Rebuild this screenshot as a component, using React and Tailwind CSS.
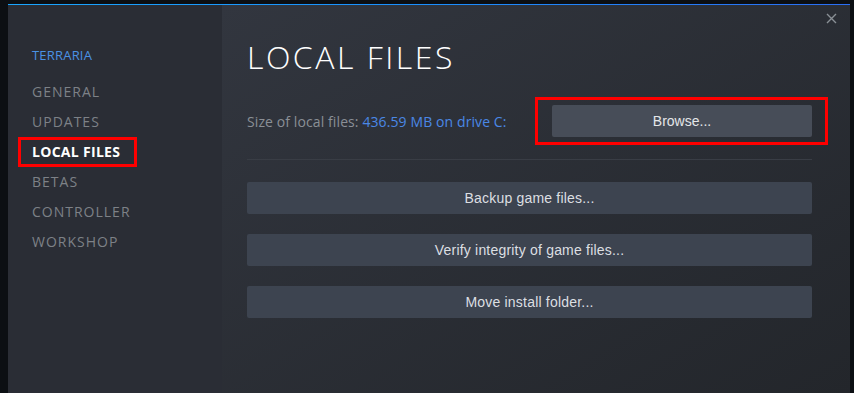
const menuItems = ["GENERAL", "UPDATES", "LOCAL FILES", "BETAS", "CONTROLLER", "WORKSHOP"];

const actions = ["Backup game files...", "Verify integrity of game files...", "Move install folder..."];

function CloseIcon() {
  return (
    <svg width="11" height="11" viewBox="0 0 11 11" fill="none">
      <path d="M1 1L10 10M10 1L1 10" stroke="#8a9096" strokeWidth="1.4" />
    </svg>
  );
}

export default function App() {
  return (
    <div className="h-[393px] w-[854px] overflow-hidden bg-[#0c0f13] pt-[4px] pl-[8px] pr-[4px]">
      <div className="flex h-full flex-col">
        <div className="h-px bg-gradient-to-r from-[#1aa6ff] via-[#1a8fff] to-[#2a6ef5]" />

        <div className="flex flex-1">
          <aside className="w-[214px] bg-[#2a2d35] pl-[24px] pt-[36px] font-['Open_Sans',sans-serif]">
            <div className="mb-[5px] flex h-[30px] items-center text-[13px] tracking-[0.2px] text-[#4a92e4]">
              TERRARIA
            </div>

            {menuItems.map((item) => {
              const active = item === "LOCAL FILES";

              return (
                <div
                  key={item}
                  className={
                    active
                      ? "relative flex h-[30px] items-center text-[14px] font-bold tracking-[0.3px] text-white"
                      : "flex h-[30px] items-center text-[14px] tracking-[1px] text-[#7d8187]"
                  }
                >
                  {item}
                  {active ? (
                    <span className="absolute -left-[14px] top-[1px] h-[30px] w-[119px] border-[3px] border-[#ff0000]" />
                  ) : null}
                </div>
              );
            })}
          </aside>

          <main className="relative flex-1 bg-gradient-to-br from-[#32363f] to-[#23262b] pl-[25px] pr-[38px] pt-[36px]">
            <button type="button" className="absolute right-[12px] top-[7px] p-[1px]">
              <CloseIcon />
            </button>

            <h1 className="h-[32px] font-['Open_Sans',sans-serif] text-[32px] font-light leading-[32px] tracking-[2.5px] text-white">
              LOCAL FILES
            </h1>

            <div className="mt-[32px] flex items-center justify-between">
              <p className="font-['Open_Sans',sans-serif] text-[14px] tracking-[0.1px] text-[#8a8f96]">
                Size of local files:{" "}
                <span className="text-[#4a88e6]">436.59 MB on drive C:</span>
              </p>

              <div className="relative">
                <button
                  type="button"
                  className="h-[32px] w-[260px] rounded-[2px] bg-[#474d58] font-['Liberation_Sans',sans-serif] text-[14px] text-[#e4e6e8]"
                >
                  Browse...
                </button>
                <span className="absolute -bottom-[8px] -left-[17px] -right-[16px] -top-[8px] border-[3px] border-[#ff0000]" />
              </div>
            </div>

            <div className="mt-[22px] h-px bg-[#393d45]" />

            <div className="mt-[22px] flex flex-col gap-[20px]">
              {actions.map((label) => (
                <button
                  key={label}
                  type="button"
                  className="h-[32px] w-full rounded-[2px] bg-[#3d4450] font-['Liberation_Sans',sans-serif] text-[14px] tracking-[0.2px] text-[#dcdfe2]"
                >
                  {label}
                </button>
              ))}
            </div>
          </main>
        </div>
      </div>
    </div>
  );
}
